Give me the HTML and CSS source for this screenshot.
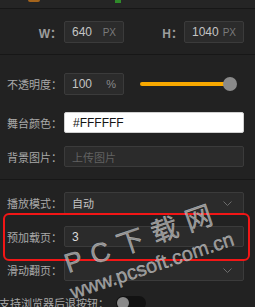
FILE: index.html
```html
<!DOCTYPE html>
<html lang="zh">
<head>
<meta charset="utf-8">
<link rel="stylesheet" href="styles.css">
</head>
<body>
<div class="page">
  <div class="top">
    <span class="mark-orange"></span>
    <span class="mark-green"></span>
  </div>

  <div class="sec sec1">
    <div class="row">
      <span class="lbl lbl-en">W：</span>
      <div class="inp short"><span>640</span><span class="unit">PX</span></div>
      <span class="spacer"></span>
      <span class="lbl-h lbl-en">H：</span>
      <div class="inp short"><span>1040</span><span class="unit">PX</span></div>
    </div>
  </div>

  <div class="sec sec2">
    <div class="row">
      <span class="lbl">不透明度：</span>
      <div class="inp short"><span>100</span><span class="unit pct">%</span></div>
      <div class="slider"><span class="track"></span><span class="knob"></span></div>
    </div>
    <div class="row r-stage">
      <span class="lbl">舞台颜色：</span>
      <div class="inp wide white"><span>#FFFFFF</span></div>
    </div>
    <div class="row r-bg">
      <span class="lbl">背景图片：</span>
      <div class="inp wide"><span class="ph">上传图片</span></div>
    </div>
  </div>

  <div class="sec sec3">
    <div class="row">
      <span class="lbl">播放模式：</span>
      <div class="inp wide sel"><span>自动</span><svg class="chev" width="9" height="5" viewBox="0 0 9 5"><polyline points="0.5,0.5 4.5,4.5 8.5,0.5" fill="none" stroke="#6c6c6c" stroke-width="1"/></svg></div>
    </div>
    <div class="row r-pre">
      <span class="lbl">预加载页：</span>
      <div class="inp wide"><span class="val">3</span></div>
    </div>
    <div class="row r-slide">
      <span class="lbl">滑动翻页：</span>
      <div class="inp wide sel"><span></span><svg class="chev" width="9" height="5" viewBox="0 0 9 5"><polyline points="0.5,0.5 4.5,4.5 8.5,0.5" fill="none" stroke="#6c6c6c" stroke-width="1"/></svg></div>
    </div>
    <div class="row r-back">
      <span class="lbl-long">支持浏览器后退按钮：</span>
      <span class="toggle"><span class="tknob"></span></span>
    </div>
  </div>

  <div class="redbox"></div>
  <div class="wm wm1">PC下载网</div>
  <div class="wm wm2">www.pcsoft.com.cn</div>
</div>
</body>
</html>
```

FILE: styles.css
```css
* { box-sizing: border-box; }
html, body { margin: 0; padding: 0; }
body {
  background: #222222;
  font-family: "Liberation Sans", "Noto Sans CJK SC", sans-serif;
  overflow: hidden;
}
.page {
  position: relative;
  width: 255px;
  height: 307px;
  overflow: hidden;
  background: #222222;
}
.top {
  height: 9px;
  background: #252525;
  border-bottom: 1px solid #171717;
  display: flex;
  align-items: flex-start;
}
.mark-orange {
  margin-left: 28px;
  width: 12px;
  height: 2px;
  background: #a4641c;
  border-radius: 0 0 5px 5px;
}
.mark-green {
  margin-left: 75px;
  width: 6px;
  height: 3px;
  background: #2f8a2a;
}
.sec { border-bottom: 1px solid #171717; }
.sec1 { padding: 12px 0 11px; }
.sec2 { padding: 18px 0 12px; }
.sec3 { padding: 12px 0 0; border-bottom: none; }

.row {
  display: flex;
  align-items: center;
  height: 22px;
}
.r-stage { margin-top: 17px; height: 21px; }
.r-bg { margin-top: 13px; height: 21px; }
.r-pre { margin-top: 12px; height: 21px; }
.r-slide { margin-top: 12px; }
.r-back { margin-top: 11px; }

.lbl {
  width: 62px;
  margin-right: 2px;
  text-align: right;
  font-size: 11px;
  color: #a9a9a9;
  white-space: nowrap;
}
.lbl-en {
  font-size: 12px;
  color: #9c9c9c;
  font-weight: bold;
}
.lbl-h {
  margin-right: 1px;
  white-space: nowrap;
}
.spacer { flex: 1; }

.inp {
  height: 100%;
  background: #2b2b2b;
  border: 1px solid #3b3b3b;
  border-radius: 2px;
  display: flex;
  align-items: center;
  justify-content: space-between;
  padding: 0 7px 0 7px;
  font-size: 12px;
  color: #c4c4c4;
}
.short { width: 60px; }
.sec1 .row { padding-right: 11px; }
.wide { width: 180px; }
.unit { font-size: 10px; color: #7a7a7a; }
.pct { font-size: 11px; color: #8a8a8a; }
.white {
  background: #ffffff;
  border-color: #d0d0d0;
  color: #141414;
  padding-left: 8px;
}
.ph { color: #626262; font-size: 11px; }
.sel { padding-right: 11px; color: #c4c4c4; font-size: 11px; }
.val { color: #dcdcdc; }

.slider {
  margin-left: 16px;
  width: 97px;
  height: 14px;
  display: flex;
  align-items: center;
}
.track {
  flex: 1;
  height: 4px;
  background: #f8a800;
  border-radius: 2px;
}
.knob {
  width: 14px;
  height: 14px;
  margin-left: -7px;
  border-radius: 50%;
  background: #8a8a8a;
}

.lbl-long {
  font-size: 11px;
  color: #a9a9a9;
  white-space: nowrap;
  margin-left: -1px;
  margin-right: 7px;
}
.toggle {
  width: 30px;
  height: 14px;
  border-radius: 7px;
  background: #121212;
  display: flex;
  align-items: center;
  padding-left: 1px;
}
.tknob {
  width: 12px;
  height: 12px;
  border-radius: 50%;
  background: #8a8a8a;
}

.redbox {
  position: absolute;
  left: 3px;
  top: 213px;
  width: 247px;
  height: 48px;
  border: 2px solid #f21616;
  border-radius: 6px;
}
.wm {
  position: absolute;
  white-space: nowrap;
  color: rgba(165, 165, 165, 0.85);
  -webkit-text-stroke: 0.4px rgba(235, 235, 235, 0.6);
  transform-origin: left bottom;
  font-family: "Liberation Sans", "Noto Sans CJK SC", sans-serif;
}
.wm1 {
  left: 70px;
  top: 250px;
  font-size: 27px;
  line-height: 28px;
  letter-spacing: 9px;
  transform: rotate(-19deg);
}
.wm2 {
  left: 74px;
  top: 282px;
  font-size: 20px;
  line-height: 20px;
  transform: rotate(-18.5deg);
}
```
